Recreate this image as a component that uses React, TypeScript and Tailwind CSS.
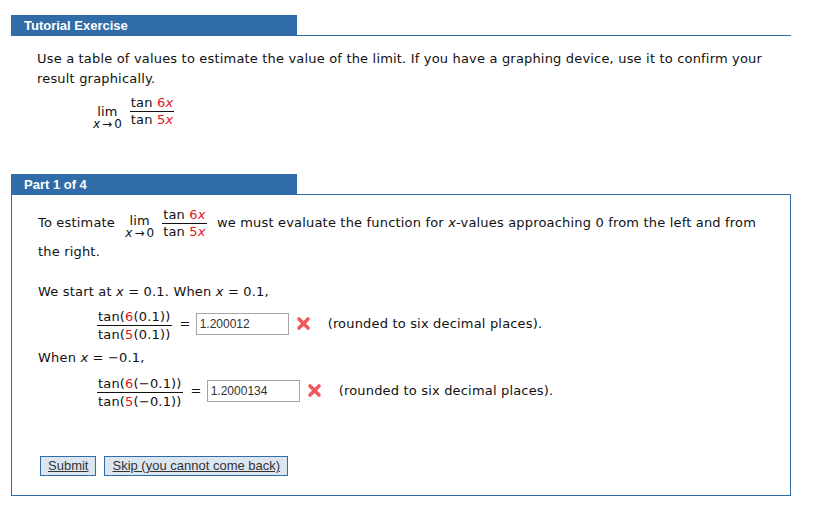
import React from 'react';

const body = "font-['DejaVu_Sans',Verdana,sans-serif] text-[13px] tracking-[0.18px] text-[#111]";
const arial = "font-['Liberation_Sans',Arial,sans-serif] tracking-normal";

function Red({ children }: { children: React.ReactNode }) {
  return <span className="text-[#e0161b]">{children}</span>;
}

function X() {
  return <i>x</i>;
}

function Frac({
  top,
  bottom,
  tight,
}: {
  top: React.ReactNode;
  bottom: React.ReactNode;
  tight?: boolean;
}) {
  return (
    <span className={`inline-flex flex-col items-center ${tight ? 'leading-[16px]' : 'leading-[17px]'}`}>
      <span className="border-b border-[#111] px-[1px]">{top}</span>
      <span className="px-[1px]">{bottom}</span>
    </span>
  );
}

// lim over x -> 0, then the fraction tan 6x / tan 5x
function Limit({ inline }: { inline?: boolean }) {
  return (
    <span className={`inline-flex items-end ${inline ? 'align-middle my-[-8px]' : ''}`}>
      <span className={`inline-flex flex-col items-center mr-[8px] ${inline ? '' : 'mb-[-3px]'}`}>
        <span className="leading-[13px]">lim</span>
        <span className="leading-[13px] text-[12px] tracking-normal">
          <X />
          <span className="mx-[2px]">→</span>0
        </span>
      </span>
      <Frac
        tight
        top={
          <>
            tan <Red>6</Red>
            <Red>
              <X />
            </Red>
          </>
        }
        bottom={
          <>
            tan <Red>5</Red>
            <Red>
              <X />
            </Red>
          </>
        }
      />
    </span>
  );
}

function WrongMark() {
  return (
    <svg width="15" height="15" viewBox="0 0 15 15" className="inline-block">
      <path d="M3 3 L12 12 M12 3 L3 12" stroke="#f0585c" strokeWidth="3.6" strokeLinecap="round" />
    </svg>
  );
}

function Header({ title }: { title: string }) {
  return (
    <div className="border-b border-[#2f6ca8] h-[21px]">
      <div
        className={`w-[286px] h-[21px] bg-[#2f6ca8] text-white font-bold text-[13px] pl-[13px] leading-[21px] ${arial}`}
      >
        {title}
      </div>
    </div>
  );
}

function AnswerRow({
  num,
  den,
  value,
}: {
  num: React.ReactNode;
  den: React.ReactNode;
  value: string;
}) {
  return (
    <div className="flex items-center pl-[59px]">
      <Frac top={num} bottom={den} />
      <div className="flex items-center mb-[4px]">
        <span className="ml-[8px] mr-[5px]">=</span>
        <input
          readOnly
          value={value}
          className={`w-[93px] h-[22px] border border-[#a5a5a5] px-[3px] text-[12px] text-[#333] outline-none ${arial}`}
        />
        <span className="ml-[7px] mr-[17px] flex">
          <WrongMark />
        </span>
        <span>(rounded to six decimal places).</span>
      </div>
    </div>
  );
}

export default function App() {
  return (
    <div className={`bg-white min-h-[507px] pt-[15px] pl-[11px] w-[836px] ${body}`}>
      <div className="w-[780px]">
        <Header title="Tutorial Exercise" />
        <div className="pl-[26px] pt-[13px] leading-[20px] pr-[20px]">
          <p>
            Use a table of values to estimate the value of the limit. If you have a graphing device, use it to confirm
            your result graphically.
          </p>
          <div className="pl-[56px] mt-[6px]">
            <Limit />
          </div>
        </div>

        <div className="mt-[46px]">
          <Header title="Part 1 of 4" />
          <div className="border border-t-0 border-[#2f6ca8] pl-[26px] pr-[30px] pt-[13px] pb-[19px]">
            <p className="leading-[29px]">
              To estimate <span className="inline-block w-[6px]" />
              <Limit inline />
              <span className="inline-block w-[6px]" /> we must evaluate the function for <X />-values approaching 0
              from the left and from the right.
            </p>
            <p className="mt-[16px] leading-[20px]">
              We start at <X /> = 0.1. When <X /> = 0.1,
            </p>
            <div className="mt-[6px]">
              <AnswerRow
                num={
                  <>
                    tan(<Red>6</Red>(0.1))
                  </>
                }
                den={
                  <>
                    tan(<Red>5</Red>(0.1))
                  </>
                }
                value="1.200012"
              />
            </div>
            <p className="mt-[5px] leading-[20px]">
              When <X /> = −0.1,
            </p>
            <div className="mt-[7px]">
              <AnswerRow
                num={
                  <>
                    tan(<Red>6</Red>(−0.1))
                  </>
                }
                den={
                  <>
                    tan(<Red>5</Red>(−0.1))
                  </>
                }
                value="1.2000134"
              />
            </div>
            <div className="mt-[46px] flex gap-[8px] pl-[2px]">
              <button
                className={`h-[20px] px-[7px] bg-[#dce6f1] border border-[#2f6ca8] text-[13px] text-[#333] underline leading-[18px] ${arial}`}
              >
                Submit
              </button>
              <button
                className={`h-[20px] px-[7px] bg-[#dce6f1] border border-[#2f6ca8] text-[13px] text-[#333] underline leading-[18px] ${arial}`}
              >
                Skip (you cannot come back)
              </button>
            </div>
          </div>
        </div>
      </div>
    </div>
  );
}
